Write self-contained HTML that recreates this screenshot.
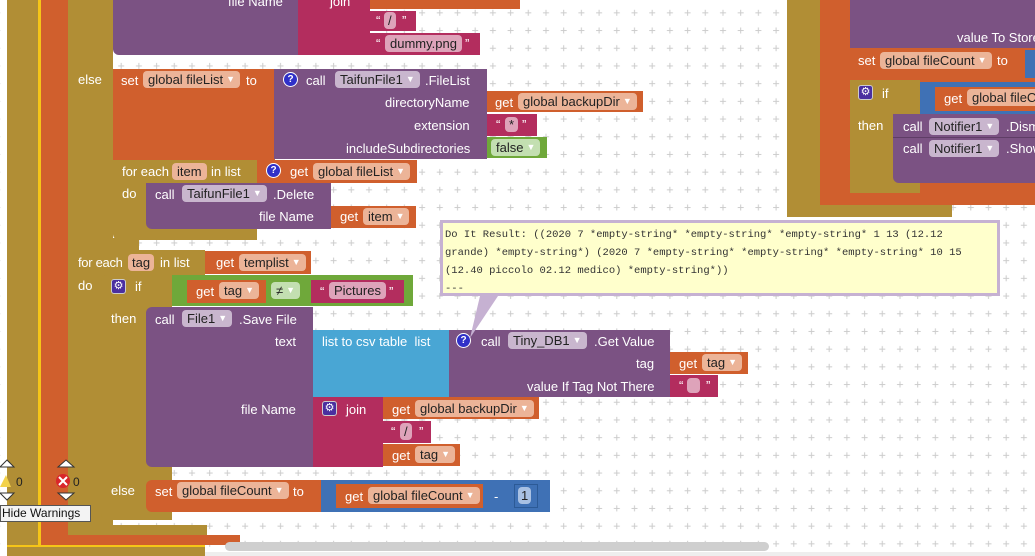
<!DOCTYPE html>
<html><head><meta charset="utf-8"><style>
*{margin:0;padding:0;box-sizing:border-box}
body{width:1035px;height:556px;overflow:hidden;background:#fff;position:relative;font-family:"Liberation Sans",sans-serif;font-size:13px;color:#fff}
.b{position:absolute}
.mu{background:#b18e35}
.or{background:#d05f2d}
.pu{background:#7b5283}
.mg{background:#b32d5e}
.gr{background:#6fa83a}
.bl{background:#3f71b5}
.lb{background:#49a6d4}
.t{position:absolute;white-space:nowrap;color:#fff;font-size:13px;line-height:15px}
.p{position:absolute;white-space:nowrap;color:#222;font-size:13px;line-height:15px;padding:1px 5px;border-radius:4px;height:17px}
.p i{font-style:normal;font-size:9px;color:#fff;vertical-align:2px;margin-left:3px}
.po{background:#ecb498}
.pp{background:#c9b6ce}
.pm{background:#dea3ba}
.pg{background:#c3dfb1}
.q{position:absolute;width:15px;height:15px;border-radius:50%;background:#3030c8;border:1px solid #fff;color:#fff;font-size:10px;font-weight:bold;text-align:center;line-height:13px}
.g{position:absolute;width:15px;height:15px;border-radius:3px;background:#4a2fa0;border:1px solid #ccc;color:#fff;font-size:11px;text-align:center;line-height:13px}
</style></head><body>
<svg class="b" style="left:0;top:0" width="1035" height="556"><defs><pattern id="gp" x="6" y="4" width="17.7" height="17.7" patternUnits="userSpaceOnUse"><path d="M6 8.8h6M9 5.8v6" stroke="#ccc" stroke-width="1"/></pattern></defs><rect width="1035" height="556" fill="url(#gp)"/></svg>

<!-- right side stack -->
<div class="b mu" style="left:787px;top:0;width:165px;height:217px"></div>
<div class="b or" style="left:820px;top:0;width:220px;height:205px"></div>
<div class="b pu" style="left:850px;top:0;width:185px;height:48px"></div>
<div class="t" style="left:957px;top:30px">value To Store</div>
<div class="b or" style="left:850px;top:48px;width:185px;height:32px"></div>
<div class="t" style="left:858px;top:53px">set</div>
<div class="p po" style="left:880px;top:52px">global fileCount<i>▼</i></div>
<div class="t" style="left:997px;top:53px">to</div>
<div class="b bl" style="left:1025px;top:50px;width:10px;height:28px"></div>
<div class="b mu" style="left:850px;top:80px;width:70px;height:113px"></div>
<div class="g" style="left:858px;top:85px">⚙</div><div class="t" style="left:882px;top:86px">if</div>
<div class="b bl" style="left:920px;top:82px;width:115px;height:32px"></div>
<div class="b or" style="left:935px;top:87px;width:100px;height:24px"></div>
<div class="t" style="left:944px;top:91px">get</div><div class="p po" style="left:967px;top:89px">global fileC</div>
<div class="t" style="left:858px;top:118px">then</div>
<div class="b pu" style="left:893px;top:114px;width:142px;height:69px;border-radius:0 0 0 6px"></div>
<div class="t" style="left:903px;top:119px">call</div><div class="p pp" style="left:929px;top:118px">Notifier1<i>▼</i></div><div class="t" style="left:1006px;top:119px">.Dism</div>
<div class="b" style="left:893px;top:137px;width:142px;height:1px;background:#5f3d66"></div>
<div class="t" style="left:903px;top:141px">call</div><div class="p pp" style="left:929px;top:140px">Notifier1<i>▼</i></div><div class="t" style="left:1006px;top:141px">.Show</div>

<!-- left stacks -->
<div class="b mu" style="left:7px;top:0;width:33px;height:556px"></div>
<div class="b mu" style="left:7px;top:545px;width:198px;height:11px;border-top:2px solid #f5c518"></div>
<div class="b" style="left:38px;top:0;width:3px;height:547px;background:#f5c518"></div>
<div class="b or" style="left:41px;top:0;width:27px;height:545px"></div>
<div class="b or" style="left:41px;top:535px;width:199px;height:10px"></div>
<div class="b mu" style="left:68px;top:0;width:45px;height:535px"></div>
<div class="b mu" style="left:68px;top:525px;width:139px;height:10px;border-radius:0 0 0 6px"></div>
<div class="b mu" style="left:68px;top:238px;width:71px;height:14px"></div>
<div class="b mu" style="left:68px;top:250px;width:137px;height:25px"></div>

<!-- top join -->
<div class="b pu" style="left:113px;top:0;width:185px;height:55px;border-radius:0 0 0 6px"></div>
<div class="t" style="left:228px;top:-6px">file Name</div>
<div class="b mg" style="left:298px;top:0;width:72px;height:55px"></div>
<div class="t" style="left:330px;top:-6px">join</div>
<div class="b or" style="left:370px;top:0;width:150px;height:9px"></div>
<div class="b mg" style="left:368px;top:11px;width:48px;height:20px"></div>
<div class="t" style="left:376px;top:13px">“</div><div class="p pm" style="left:384px;top:12px;height:17px;padding:1px 4px">/</div><div class="t" style="left:402px;top:13px">”</div>
<div class="b mg" style="left:368px;top:33px;width:112px;height:22px"></div>
<div class="t" style="left:376px;top:36px">“</div><div class="p pm" style="left:385px;top:35px">dummy.png</div><div class="t" style="left:465px;top:36px">”</div>

<div class="t" style="left:78px;top:72px">else</div>
<div class="b or" style="left:113px;top:69px;width:162px;height:91px"></div>
<div class="t" style="left:121px;top:73px">set</div><div class="p po" style="left:143px;top:71px">global fileList<i>▼</i></div><div class="t" style="left:246px;top:73px">to</div>
<div class="b pu" style="left:274px;top:69px;width:213px;height:90px"></div>
<div class="q" style="left:283px;top:72px">?</div><div class="t" style="left:306px;top:73px">call</div><div class="p pp" style="left:335px;top:71px">TaifunFile1<i>▼</i></div><div class="t" style="left:425px;top:73px">.FileList</div>
<div class="t" style="left:385px;top:95px">directoryName</div>
<div class="t" style="left:414px;top:118px">extension</div>
<div class="t" style="left:346px;top:141px">includeSubdirectories</div>
<div class="b or" style="left:487px;top:91px;width:156px;height:21px"></div>
<div class="t" style="left:495px;top:95px">get</div><div class="p po" style="left:518px;top:93px">global backupDir<i>▼</i></div>
<div class="b mg" style="left:487px;top:114px;width:50px;height:22px"></div>
<div class="t" style="left:496px;top:117px">“</div><div class="p pm" style="left:505px;top:117px;padding:0 4px;height:15px">*</div><div class="t" style="left:522px;top:117px">”</div>
<div class="b gr" style="left:487px;top:137px;width:60px;height:21px"></div>
<div class="p pg" style="left:491px;top:139px">false<i>▼</i></div>

<div class="b mu" style="left:113px;top:160px;width:144px;height:80px;border-radius:0 0 0 6px"></div>
<div class="t" style="left:122px;top:164px">for each</div><div class="p po" style="left:172px;top:163px">item</div><div class="t" style="left:211px;top:164px">in list</div>
<div class="b or" style="left:257px;top:160px;width:160px;height:23px"></div>
<div class="q" style="left:266px;top:163px">?</div><div class="t" style="left:290px;top:164px">get</div><div class="p po" style="left:313px;top:163px">global fileList<i>▼</i></div>
<div class="t" style="left:122px;top:186px">do</div>
<div class="b pu" style="left:146px;top:183px;width:185px;height:46px;border-radius:0 0 0 6px"></div>
<div class="t" style="left:155px;top:187px">call</div><div class="p pp" style="left:182px;top:185px">TaifunFile1<i>▼</i></div><div class="t" style="left:273px;top:187px">.Delete</div>
<div class="t" style="left:259px;top:209px">file Name</div>
<div class="b or" style="left:331px;top:206px;width:85px;height:22px"></div>
<div class="t" style="left:340px;top:209px">get</div><div class="p po" style="left:363px;top:208px">item<i>▼</i></div>

<div class="t" style="left:78px;top:255px;letter-spacing:-0.3px">for each</div><div class="p po" style="left:128px;top:254px;padding:1px 4px">tag</div><div class="t" style="left:160px;top:255px">in list</div>
<div class="b or" style="left:205px;top:251px;width:106px;height:23px"></div>
<div class="t" style="left:216px;top:255px">get</div><div class="p po" style="left:239px;top:254px">templist<i>▼</i></div>
<div class="t" style="left:78px;top:278px">do</div>

<div class="b mu" style="left:101px;top:275px;width:71px;height:245px;border-radius:6px 0 0 6px"></div>
<div class="g" style="left:111px;top:279px">⚙</div><div class="t" style="left:135px;top:279px">if</div>
<div class="b gr" style="left:172px;top:275px;width:241px;height:31px"></div>
<div class="b or" style="left:187px;top:280px;width:79px;height:23px"></div>
<div class="t" style="left:196px;top:284px">get</div><div class="p po" style="left:219px;top:282px">tag<i>▼</i></div>
<div class="p pg" style="left:271px;top:282px">≠<i>▼</i></div>
<div class="b mg" style="left:311px;top:280px;width:93px;height:23px"></div>
<div class="t" style="left:320px;top:284px">“</div><div class="p pm" style="left:329px;top:282px">Pictures</div><div class="t" style="left:389px;top:284px">”</div>
<div class="t" style="left:111px;top:311px">then</div>
<div class="b pu" style="left:146px;top:307px;width:167px;height:160px;border-radius:6px 0 0 6px"></div>
<div class="t" style="left:155px;top:312px">call</div><div class="p pp" style="left:182px;top:310px">File1<i>▼</i></div><div class="t" style="left:239px;top:312px">.Save File</div>
<div class="t" style="left:275px;top:334px">text</div>
<div class="t" style="left:241px;top:402px">file Name</div>
<div class="b lb" style="left:313px;top:330px;width:136px;height:67px"></div>
<div class="t" style="left:322px;top:334px">list to csv table &nbsp;list</div>
<div class="b pu" style="left:449px;top:330px;width:221px;height:67px"></div>
<div class="q" style="left:456px;top:333px">?</div><div class="t" style="left:481px;top:334px">call</div><div class="p pp" style="left:508px;top:332px">Tiny_DB1<i>▼</i></div><div class="t" style="left:594px;top:334px">.Get Value</div>
<div class="t" style="left:636px;top:356px">tag</div>
<div class="t" style="left:527px;top:379px">value If Tag Not There</div>
<div class="b or" style="left:670px;top:352px;width:78px;height:22px"></div>
<div class="t" style="left:679px;top:356px">get</div><div class="p po" style="left:702px;top:354px">tag<i>▼</i></div>
<div class="b mg" style="left:670px;top:375px;width:48px;height:22px"></div>
<div class="t" style="left:679px;top:378px">“</div><div class="p pm" style="left:687px;top:378px;width:13px;height:15px"></div><div class="t" style="left:706px;top:378px">”</div>
<div class="b mg" style="left:313px;top:397px;width:70px;height:70px"></div>
<div class="g" style="left:322px;top:401px">⚙</div><div class="t" style="left:346px;top:402px">join</div>
<div class="b or" style="left:383px;top:397px;width:156px;height:22px"></div>
<div class="t" style="left:392px;top:402px">get</div><div class="p po" style="left:415px;top:400px">global backupDir<i>▼</i></div>
<div class="b mg" style="left:383px;top:421px;width:48px;height:22px"></div>
<div class="t" style="left:391px;top:424px">“</div><div class="p pm" style="left:400px;top:423px;padding:1px 4px">/</div><div class="t" style="left:419px;top:424px">”</div>
<div class="b or" style="left:383px;top:444px;width:77px;height:22px"></div>
<div class="t" style="left:392px;top:448px">get</div><div class="p po" style="left:415px;top:446px">tag<i>▼</i></div>

<div class="t" style="left:111px;top:483px">else</div>
<div class="b or" style="left:146px;top:480px;width:176px;height:32px;border-radius:6px 0 0 6px"></div>
<div class="t" style="left:155px;top:484px">set</div><div class="p po" style="left:177px;top:482px">global fileCount<i>▼</i></div><div class="t" style="left:293px;top:484px">to</div>
<div class="b bl" style="left:321px;top:480px;width:229px;height:32px"></div>
<div class="b or" style="left:336px;top:484px;width:147px;height:24px"></div>
<div class="t" style="left:345px;top:489px">get</div><div class="p po" style="left:368px;top:487px">global fileCount<i>▼</i></div>
<div class="t" style="left:494px;top:489px">-</div>
<div class="b" style="left:514px;top:484px;width:24px;height:24px;border:1px solid #2c5a96"></div>
<div class="p" style="left:518px;top:487px;background:#a9c1e3;padding:1px 3px">1</div>

<!-- tooltip -->
<svg class="b" style="left:438px;top:218px" width="565" height="125"><path d="M2 2H562V78H60L32 120L42 78H2Z" fill="#c6b1d2"/><rect x="5" y="5" width="554" height="70" fill="#ffffcc"/></svg>
<div class="b" style="left:445px;top:226px;font-family:'Liberation Mono',monospace;font-size:10.5px;line-height:18px;color:#333;white-space:pre">Do It Result: ((2020 7 *empty-string* *empty-string* *empty-string* 1 13 (12.12
grande) *empty-string*) (2020 7 *empty-string* *empty-string* *empty-string* 10 15
(12.40 piccolo 02.12 medico) *empty-string*))
---</div>

<!-- warnings -->
<svg class="b" style="left:0;top:458px" width="80" height="45"><path d="M0 9L7 2L14 9Z" fill="#fff" stroke="#333"/><path d="M0 35L7 42L14 35Z" fill="#fff" stroke="#333"/><path d="M0 29L6 17L11 29Z" fill="#f3d24a"/><path d="M58 9L66 2L74 9Z" fill="#fff" stroke="#333"/><path d="M58 35L66 42L74 35Z" fill="#fff" stroke="#333"/><circle cx="63" cy="23" r="7" fill="#d9262b"/><path d="M59 19L67 27M67 19L59 27" stroke="#fff" stroke-width="2"/></svg>
<div class="b" style="left:16px;top:475px;color:#222;font-size:12px">0</div>
<div class="b" style="left:73px;top:475px;color:#222;font-size:12px">0</div>
<div class="b" style="left:0;top:505px;width:91px;height:17px;background:#f3f3f3;border:1px solid #555;color:#111;font-size:12px;line-height:15px;padding-left:1px">Hide Warnings</div>

<div class="b" style="left:225px;top:542px;width:544px;height:9px;border-radius:5px;background:#cfcfcf"></div>
<div class="b" style="left:205px;top:552px;width:830px;height:4px;background:#eee"></div>
</body></html>
